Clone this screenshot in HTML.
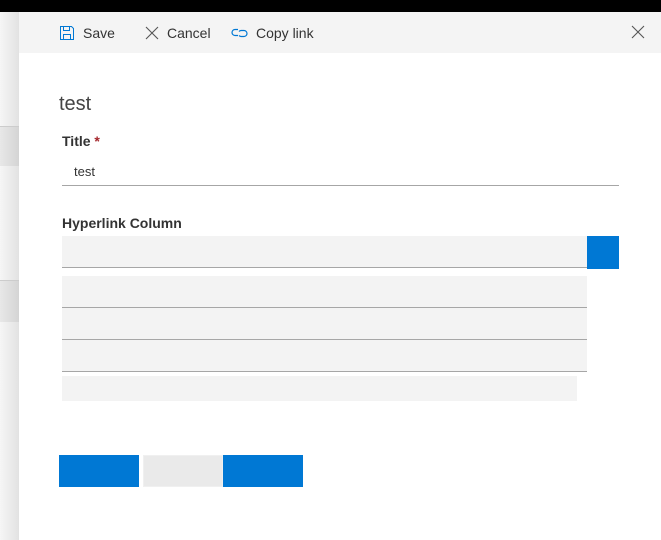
<!DOCTYPE html>
<html><head><style>
*{margin:0;padding:0;box-sizing:border-box}
body{width:661px;height:540px;overflow:hidden;background:#fff;font-family:"Segoe UI","Liberation Sans",sans-serif;position:relative}
.a{position:absolute}
.t{font-size:14px;color:#333}
</style></head><body>
<div class="a" style="left:0;top:0;width:661px;height:12px;background:#000"></div>
<div class="a" style="left:0;top:12px;width:19px;height:528px;background:linear-gradient(to right,#f6f6f6,#e2e2e2)"></div>
<div class="a" style="left:0;top:126px;width:19px;height:40px;background:linear-gradient(to right,#e8e8e8,#d4d4d4);border-top:1px solid #ccc"></div>
<div class="a" style="left:0;top:280px;width:19px;height:42px;background:linear-gradient(to right,#e8e8e8,#d4d4d4);border-top:1px solid #ccc"></div>
<div class="a" style="left:19px;top:12px;width:642px;height:41px;background:#f4f4f4"></div>
<svg class="a" style="left:59px;top:25px" width="16" height="16" viewBox="0 0 16 16" fill="none" stroke="#0078d4" stroke-width="1"><path d="M1.5 1.5h11l2 2v11h-13z"/><path d="M4.5 1.5v4h6v-4"/><path d="M4.5 14.5v-5h7v5"/></svg>
<div class="a t" style="left:83px;top:25px">Save</div>
<svg class="a" style="left:145px;top:26px" width="14" height="14" viewBox="0 0 14 14" stroke="#555" stroke-width="1.1"><path d="M1 1L13 13M13 1L1 13"/></svg>
<div class="a t" style="left:167px;top:25px">Cancel</div>
<svg class="a" style="left:231px;top:26px" width="18" height="14" viewBox="0 0 18 14" fill="none" stroke="#0078d4" stroke-width="1.2"><path d="M7 3.5H4a3 3 0 0 0 0 6h3"/><path d="M8 5.5a3 3 0 0 1 2-1h3a3 3 0 0 1 0 6h-3a3 3 0 0 1-2-1"/></svg>
<div class="a t" style="left:256px;top:25px">Copy link</div>
<svg class="a" style="left:631px;top:25px" width="14" height="14" viewBox="0 0 14 14" stroke="#555" stroke-width="1.1"><path d="M1 1L13 13M13 1L1 13"/></svg>
<div class="a" style="left:59px;top:93px;font-size:20px;font-weight:300;color:#444">test</div>
<div class="a" style="left:62px;top:133px;font-size:14px;font-weight:bold;color:#333">Title <span style="color:#a4262c">*</span></div>
<div class="a" style="left:74px;top:164px;font-size:13px;color:#333">test</div>
<div class="a" style="left:62px;top:185px;width:557px;height:1px;background:#a6a6a6"></div>
<div class="a" style="left:62px;top:215px;font-size:14px;font-weight:bold;color:#333">Hyperlink Column</div>
<div class="a" style="left:62px;top:236px;width:525px;height:32px;background:#f3f3f3;border-bottom:1px solid #a6a6a6"></div>
<div class="a" style="left:587px;top:236px;width:32px;height:33px;background:#0078d4"></div>
<div class="a" style="left:62px;top:276px;width:525px;height:32px;background:#f3f3f3;border-bottom:1px solid #a6a6a6"></div>
<div class="a" style="left:62px;top:308px;width:525px;height:32px;background:#f3f3f3;border-bottom:1px solid #a6a6a6"></div>
<div class="a" style="left:62px;top:340px;width:525px;height:32px;background:#f3f3f3;border-bottom:1px solid #a6a6a6"></div>
<div class="a" style="left:62px;top:376px;width:515px;height:25px;background:#f3f3f3"></div>
<div class="a" style="left:59px;top:455px;width:80px;height:32px;background:#0078d4"></div>
<div class="a" style="left:143px;top:455px;width:80px;height:32px;background:#eaeaea;border:1px solid #f0f0f0"></div>
<div class="a" style="left:223px;top:455px;width:80px;height:32px;background:#0078d4"></div>
</body></html>
